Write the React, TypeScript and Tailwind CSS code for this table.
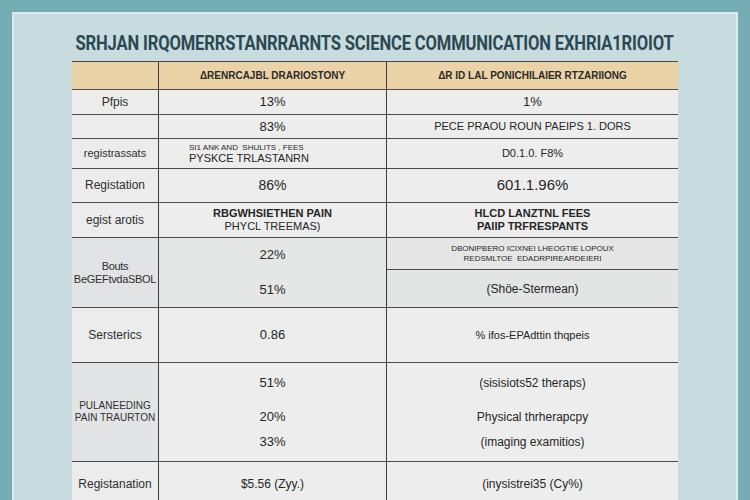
import React from 'react';

const line = 'border-t border-[#4a4a4a]';
const cell = 'flex flex-col items-center justify-center text-center';
const divider = 'border-l border-[#3a3a3a]';

function Row({
  h,
  label,
  labelBg = 'bg-[#ececec]',
  mid,
  midBg = 'bg-[#ededed]',
  right,
  rightBg = 'bg-[#ededed]',
}: {
  h: string;
  label?: React.ReactNode;
  labelBg?: string;
  mid: React.ReactNode;
  midBg?: string;
  right: React.ReactNode;
  rightBg?: string;
}) {
  return (
    <div className={`flex ${h} ${line}`}>
      <div className={`${cell} w-[86px] ${labelBg} text-[12px] leading-[13px] text-[#2f2f2f]`}>{label}</div>
      <div className={`${cell} w-[228px] ${divider} ${midBg} text-[12px] text-[#262626]`}>{mid}</div>
      <div className={`w-[292px] ${divider} ${rightBg} flex flex-col text-[12px] text-[#262626]`}>{right}</div>
    </div>
  );
}

export default function App() {
  return (
    <div className="h-[500px] w-[750px] overflow-hidden bg-[#74adb3] px-3 pt-3 font-['Liberation_Sans',Arial,sans-serif]">
      <div className="h-[520px] border-2 border-b-0 border-[#deebed] bg-[#c8dcdf]">
        <div className="flex h-[47px] justify-center pt-[17px]">
          <h1 className="scale-x-[0.79] whitespace-nowrap font-['Roboto',sans-serif] text-[21px] leading-[24px] font-bold tracking-[-0.2px] text-[#2c4853]">
            SRHJAN IRQOMERRSTANRRARNTS SCIENCE COMMUNICATION EXHRIA1RIOIOT
          </h1>
        </div>

        <div className="mx-auto w-[606px]">
          {/* header */}
          <div className={`flex h-[28px] ${line} bg-[#ebd3a7]`}>
            <div className="w-[86px]" />
            <div className={`${cell} w-[228px] ${divider} text-[10px] font-bold text-[#2a2a2a]`}>
              ΔRENRCAJBL DRARIOSTONY
            </div>
            <div className={`${cell} w-[292px] ${divider} text-[10px] font-bold text-[#2a2a2a]`}>
              ΔR ID LAL PONICHILAIER RTZARIIONG
            </div>
          </div>

          <Row
            h="h-[25px]"
            label="Pfpis"
            mid={<span className="text-[13px]">13%</span>}
            right={<div className={`${cell} flex-1 text-[13px]`}>1%</div>}
          />
          <Row
            h="h-[24px]"
            mid={<span className="text-[13px]">83%</span>}
            right={<div className={`${cell} flex-1 text-[11px]`}>PECE PRAOU ROUN PAEIPS 1. DORS</div>}
          />
          <Row
            h="h-[30px]"
            label={<span className="text-[11px]">registrassats</span>}
            mid={
              <div className="w-full pl-[30px] text-left">
                <div className="text-[8px] leading-[9px]">SI1 ANK AND &nbsp;SHULITS , FEES</div>
                <div className="text-[11px] leading-[12px]">PYSKCE TRLASTANRN</div>
              </div>
            }
            right={<div className={`${cell} flex-1 text-[11px]`}>D0.1.0. F8%</div>}
          />
          <Row
            h="h-[34px]"
            label="Registation"
            mid={<span className="text-[14px]">86%</span>}
            right={<div className={`${cell} flex-1 text-[15px]`}>601.1.96%</div>}
          />
          <Row
            h="h-[35px]"
            label="egist arotis"
            mid={
              <div className="text-[11px] leading-[13px]">
                <div className="font-bold">RBGWHSIETHEN PAIN</div>
                <div>PHYCL TREEMAS)</div>
              </div>
            }
            right={
              <div className={`${cell} flex-1 text-[11px] leading-[13px] font-bold`}>
                <div>HLCD LANZTNL FEES</div>
                <div>PAIIP TRFRESPANTS</div>
              </div>
            }
          />
          <Row
            h="h-[70px]"
            labelBg="bg-[#e1e3e4]"
            midBg="bg-[#e5e6e6]"
            label={
              <div className="text-[11px] leading-[13px] tracking-[-0.3px]">
                <div>Bouts</div>
                <div>BeGEFtvdaSBOL</div>
              </div>
            }
            mid={
              <div className="flex flex-col gap-[21px] text-[13px] leading-[14px]">
                <span>22%</span>
                <span>51%</span>
              </div>
            }
            right={
              <>
                <div className={`${cell} h-[31px] bg-[#e6e6e6] text-[8px] leading-[10px]`}>
                  <div>DBONIPBERO ICIXNEI LHEOGTIE LOPOUX</div>
                  <div>REDSMLTOE &nbsp;EDADRPIREARDEIERI</div>
                </div>
                <div className={`${cell} flex-1 ${line} bg-[#e3e4e4] text-[12px]`}>(Shöe-Stermean)</div>
              </>
            }
          />
          <Row
            h="h-[55px]"
            label="Sersterics"
            mid={<span className="text-[13px]">0.86</span>}
            right={<div className={`${cell} flex-1 text-[11px]`}>% ifos-EPAdttin thqpeis</div>}
          />
          <Row
            h="h-[99px]"
            labelBg="bg-[#e2e4e5]"
            label={
              <div className="text-[10px] leading-[12px]">
                <div>PULANEEDING</div>
                <div>PAIN TRAURTON</div>
              </div>
            }
            mid={
              <div className="flex flex-col text-[13px] leading-[14px]">
                <span>51%</span>
                <span className="mt-[20px]">20%</span>
                <span className="mt-[11px]">33%</span>
              </div>
            }
            right={
              <div className={`${cell} flex-1 text-[12px] leading-[14px]`}>
                <span>(sisisiots52 theraps)</span>
                <span className="mt-[20px]">Physical thrheraрcpy</span>
                <span className="mt-[11px]">(imaging examitios)</span>
              </div>
            }
          />
          <Row
            h="h-[45px]"
            label="Registanation"
            mid={<span className="text-[12px]">$5.56 (Zyy.)</span>}
            right={<div className={`${cell} flex-1 text-[12px]`}>(inysistrei35 (Cy%)</div>}
          />
        </div>
      </div>
    </div>
  );
}
